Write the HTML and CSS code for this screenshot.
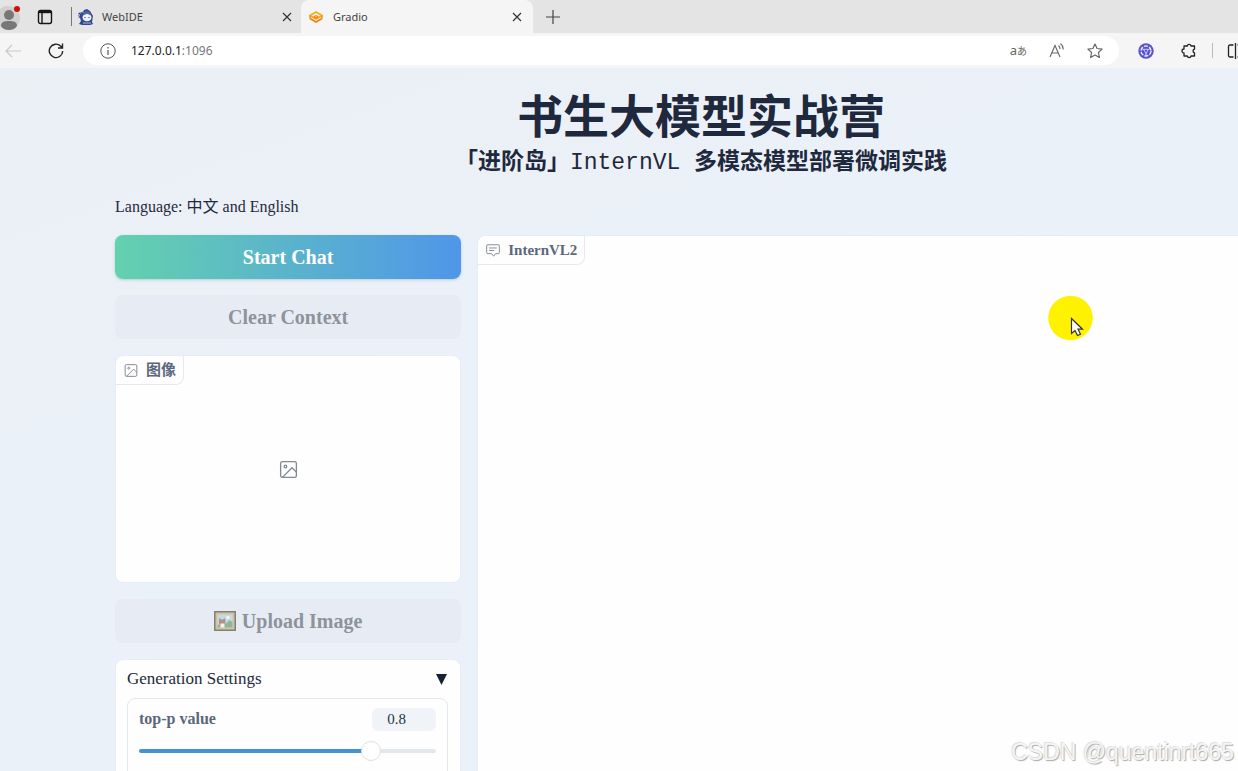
FILE: index.html
```
<!DOCTYPE html>
<html lang="zh-CN">
<head>
<meta charset="utf-8">
<title>Gradio</title>
<link rel="stylesheet" href="styles.css">
</head>
<body>
<header class="browser">
  <div class="tabs">
    <button class="profile" aria-label="Profile">
      <svg width="20" height="26" viewBox="0 0 20 26"><circle cx="8" cy="14" r="12" fill="#d2d0cf"/><circle cx="9" cy="11" r="5" fill="#777"/><path d="M1 22c0-4 3-5 8-5s8 1 8 5c-2 3-5 4-8 4s-6-1-8-4z" fill="#777"/><circle cx="17" cy="5" r="3" fill="#c5120c"/></svg>
    </button>
    <button class="workspace" aria-label="Tab actions">
      <svg width="16" height="16" viewBox="0 0 16 16" fill="none" stroke="#161616" stroke-width="1.4"><rect x="1.5" y="1.5" width="13" height="13" rx="2"/><path d="M2 3h12" stroke-width="2.4"/><path d="M5 4v10"/></svg>
    </button>
    <div class="tab tab-idle">
      <svg width="16" height="16" viewBox="0 0 16 16"><path d="M0 4l5-1 1-2 3-1 3 2 3 5-1 6 1 2-3 1H4l-3-1 2-3-1-3-2-1 2-1z" fill="#34478e"/><path d="M0 7l4-4 2 1" fill="none" stroke="#7184c4"/><ellipse cx="9" cy="8.5" rx="4.5" ry="3.8" fill="#eef0fa"/><path d="M5 6c2 0 3-1 4-2 1 1 2 2 4 2-1-3-2-4-4-4S5 4 5 6z" fill="#52659f"/><path d="M7 8v1M11 8v1" stroke="#27366f"/><path d="M5 14h8" stroke="#a9b6de"/></svg>
      <span class="tab-name">WebIDE</span>
      <button class="close" aria-label="Close WebIDE"><svg width="10" height="10" viewBox="0 0 10 10"><path d="M1 1l8 8M9 1L1 9" stroke="#333" stroke-width="1.2"/></svg></button>
    </div>
    <div class="tab tab-active">
      <svg width="14" height="14" viewBox="0 0 14 14" fill="none"><path d="M1 5.500L7 2l6 3.500L7 9z" stroke="#fbab20" stroke-width="1.800"/><path d="M1 8.500L7 12l6-3.500" stroke="#f08313" stroke-width="1.800"/><path d="M1 5.500v3M13 5.500v3M5 7c1-1.500 3-1.500 4 0-1 1.200-3 1.200-4 0z" stroke="#f18418" stroke-width="1.300"/></svg>
      <span class="tab-name">Gradio</span>
      <button class="close" aria-label="Close Gradio"><svg width="10" height="10" viewBox="0 0 10 10"><path d="M1 1l8 8M9 1L1 9" stroke="#333" stroke-width="1.2"/></svg></button>
    </div>
    <button class="new-tab" aria-label="New tab"><svg width="14" height="14" viewBox="0 0 14 14"><path d="M7 0v14M0 7h14" stroke="#444" stroke-width="1.2"/></svg></button>
  </div>
  <div class="toolbar">
    <button class="back" aria-label="Back"><svg width="16" height="14" viewBox="0 0 16 14" fill="none" stroke="#c8c8c8" stroke-width="1.2"><path d="M16 7H1M7 1L1 7l6 6"/></svg></button>
    <button class="reload" aria-label="Reload"><svg width="16" height="16" viewBox="0 0 16 16" fill="none" stroke="#222" stroke-width="1.4"><path d="M14.700 8A6.700 6.700 0 1 1 12.800 3.200L14.500 5M14.500 0.500V5H10"/></svg></button>
    <div class="address">
      <svg width="16" height="16" viewBox="0 0 16 16" fill="none" stroke="#555"><circle cx="8" cy="8" r="7.2"/><path d="M8 7v5M8 4v1.4" stroke-width="1.2"/></svg>
      <span class="url">127.0.0.1<span class="port">:1096</span></span>
      <button class="translate" aria-label="Translate">a<span class="kana">あ</span></button>
      <button class="aloud" aria-label="Read aloud"><svg width="16" height="16" viewBox="0 0 16 16" fill="none" stroke="#666" stroke-width="1.1"><path d="M1 14L6 2.500 11 14M2.800 10h6.400M9.500 2.500c1 1 1.500 2 1.500 3.500M11.500 .5c1.800 1.500 2.800 3.500 2.800 6"/></svg></button>
      <button class="favorite" aria-label="Favorite"><svg width="16" height="16" viewBox="0 0 16 16" fill="none" stroke="#666" stroke-width="1.2" stroke-linejoin="round"><path d="M8 1l2.100 4.500 5 .6-3.700 3.400 1 5L8 12l-4.400 2.500 1-5L.9 6.100l5-.6z"/></svg></button>
    </div>
    <button class="extension" aria-label="Extension"><svg width="16" height="16" viewBox="0 0 16 16"><circle cx="8" cy="8" r="7.700" fill="#5752cf"/><g fill="none" stroke="#e8e8ff" stroke-width="1.400"><circle cx="8" cy="8" r="5" stroke-dasharray="4 1.236"/><path d="M5.500 6.500L3 5M10.500 6.500L13 5M8 10.500V13" stroke-width="1"/></g><path d="M5.500 6.300h5L8 10.500z" fill="#5752cf" stroke="#e8e8ff" stroke-width=".8"/></svg></button>
    <button class="puzzle" aria-label="Extensions"><svg width="16" height="16" viewBox="0 0 16 16" fill="none" stroke="#222" stroke-width="1.300" stroke-linejoin="round"><path d="M4 3h2.200a2 2 0 0 1 3.900 0H13.500v3.200a1.900 1.900 0 0 0 0 3.700V13h-3.400a2 2 0 0 1-3.900 0H3V10a2 2 0 0 1 0-4V3z"/></svg></button>
    <span class="divider"></span>
    <button class="split" aria-label="Split screen"><svg width="16" height="16" viewBox="0 0 16 16" fill="none" stroke="#222" stroke-width="1.300"><path d="M6.500 2H3a1.500 1.500 0 0 0-1.500 1.500v9A1.500 1.500 0 0 0 3 14h3.500M8.500 0v16M10.500 2h4v12h-4"/></svg></button>
  </div>
</header>
<div class="viewport">
<main class="page">
  <h1 class="title">书生大模型实战营</h1>
  <h2 class="subtitle">「进阶岛」<span class="latin">InternVL </span>多模态模型部署微调实践</h2>
  <p class="language">Language: 中文 and English</p>
  <div class="columns">
    <section class="controls">
      <button class="btn primary">Start Chat</button>
      <button class="btn secondary" disabled>Clear Context</button>
      <div class="image-panel">
        <div class="label">
          <svg class="icon" viewBox="2 2 20 20"><rect x="3" y="3" width="18" height="18" rx="2"/><circle cx="8.500" cy="8.500" r="1.500"/><path d="M21 15l-5-5L5 21"/></svg>
          <span>图像</span>
        </div>
        <div class="empty"><svg class="icon-large" viewBox="0 0 24 24"><rect x="3" y="3" width="18" height="18" rx="2"/><circle cx="8.500" cy="8.500" r="1.500"/><path d="M21 15l-5-5L5 21"/></svg></div>
      </div>
      <button class="btn secondary" disabled>
        <svg width="22" height="20" viewBox="0 0 22 20"><rect width="22" height="20" fill="#7f8078"/><rect x="1.500" y="1.500" width="19" height="17" fill="#d3c39c"/><rect x="3.500" y="3.500" width="15" height="13" fill="#c2dbe5"/><circle cx="14" cy="6.500" r="1.800" fill="#f0f4ef"/><path d="M3.500 14l5-1 3 0 4-4 3 2v5.500h-15z" fill="#8eb79a"/><path d="M5 7l2 1.500h2L11 7l.5 6-3 1.500-3.500-1z" fill="#b58e84"/><path d="M6.500 12.500h4v4h-4z" fill="#f5f2ed"/></svg>
        <span>Upload Image</span>
      </button>
      <section class="settings">
        <button class="settings-head"><span>Generation Settings</span><svg width="11" height="11" viewBox="0 0 11 11"><path d="M0 0h11L5.500 11z" fill="#172136"/></svg></button>
        <div class="slider-card">
          <div class="slider-head">
            <label for="top-p">top-p value</label>
            <input class="number" type="text" inputmode="decimal" value="0.8" aria-label="top-p number">
          </div>
          <input class="range" id="top-p" type="range" min="0" max="1" step="0.1" value="0.8">
        </div>
      </section>
    </section>
    <section class="chat">
      <div class="label">
        <svg class="icon" viewBox="1 2 22 20"><path d="M4 3h16a2 2 0 0 1 2 2v10a2 2 0 0 1-2 2h-4l-3 4-3-4H4a2 2 0 0 1-2-2V5a2 2 0 0 1 2-2zM6 8h12M6 12h8"/></svg>
        <span>InternVL2</span>
      </div>
    </section>
  </div>
</main>
</div>
<div class="pointer"><svg width="46" height="46" viewBox="0 0 46 46"><circle cx="22.500" cy="23" r="22.300" fill="#fff200"/><path d="M23.500 23.500v15l3.500-3 2.500 5 3-1.300-2.500-5h4.500z" fill="#fff" stroke="#333" stroke-width="1.200"/></svg></div>
<div class="watermark">CSDN @quentinrt665</div>
</body>
</html>
```
FILE: styles.css
```
* { box-sizing: border-box; }
body {
  margin: 0;
  height: 100vh;
  overflow: hidden;
  display: flex;
  flex-direction: column;
  color: #1f293d;
  background: #ebf1f8;
  font-family: "Liberation Serif", "Noto Sans CJK SC", serif;
}
button, input { font: inherit; color: inherit; }
button { border: 0; padding: 0; background: none; }
svg { display: block; flex: none; }

.browser { flex: none; font-family: "Noto Sans", "Noto Sans CJK SC", sans-serif; background: #f5f5f5; }
.tabs { display: flex; align-items: center; height: 33px; background: #e4e4e4; }
.workspace { margin-left: 17px; }
.tab { display: flex; align-items: center; height: 33px; font-size: 11px; color: #444; }
.tab-idle { width: 230px; margin-left: 18px; padding: 0 9px 0 7px; position: relative; }
.tab-idle::before { content: ""; position: absolute; left: 0; top: 7px; width: 1px; height: 19px; background: #777; }
.tab-active { width: 232px; padding: 0 11px 0 8px; background: #f5f5f5; border-radius: 8px 8px 0 0; }
.tab-name { flex: 1; margin-left: 8px; }
.tab-active .tab-name { margin-left: 10px; }
.new-tab { margin-left: 13px; }
.toolbar { display: flex; align-items: center; height: 35px; }
.back { margin-left: 5px; }
.reload { margin-left: 27px; }
.address {
  flex: 1; display: flex; align-items: center; height: 29px;
  margin-left: 19px; padding: 0 16px 0 17px;
  background: #fff; border-radius: 15px;
}
.url { flex: 1; margin-left: 15px; font-size: 12px; color: #222; }
.port { color: #777; }
.translate { font-size: 13px; line-height: 18px; color: #666; }
.kana { font-size: 10px; }
.aloud, .favorite { margin-left: 22px; }
.extension { margin-left: 19px; }
.puzzle { margin-left: 27px; }
.divider { width: 1px; height: 15px; margin-left: 15px; background: #bbb; }
.split { width: 11px; margin-left: 14px; overflow: hidden; }

.viewport { flex: 1; min-height: 0; display: flex; overflow: hidden; }
.page {
  flex: none;
  display: flex; flex-direction: column;
  width: calc(100% + 164px);
  padding: 16px 115px 0;
  background: linear-gradient(160deg, #ebf0f5, #ebf1f9 45%, #eaf0f7);
}
.title, .subtitle { margin: 0; text-align: center; font-weight: 700; }
.title { font-size: 46px; line-height: 58px; font-family: "Noto Sans CJK SC", sans-serif; }
.subtitle { margin-top: 6px; font-size: 23px; line-height: 30px; font-family: "Liberation Mono", "Noto Sans CJK SC", monospace; }
.latin { font-weight: 400; white-space: pre; }
.language { margin: 17px 0 16px; font-size: 16px; line-height: 24px; }
.columns { flex: 1; min-height: 0; display: flex; gap: 16px; }
.controls { flex: 3 1 0; min-width: 0; display: flex; flex-direction: column; gap: 16px; }
.btn {
  flex: none; display: flex; align-items: center; justify-content: center; gap: 6px;
  height: 44px; border-radius: 8px; font-size: 20px; font-weight: 700;
}
.primary { color: #fff; background: linear-gradient(90deg, #64d1ae, #5096e9); box-shadow: 0 1px 3px #b9cbd5; }
.secondary { color: #8e939b; background: #e7ecf4; }
.image-panel, .settings, .chat { background: #fefefe; border: 1px solid #e7edf4; border-radius: 8px; }
.image-panel { flex: none; display: flex; flex-direction: column; height: 228px; position: relative; }
.label {
  align-self: flex-start; display: flex; align-items: center; gap: 8px;
  height: 29px; padding: 0 7px 0 8px;
  border: solid #e5eaf1; border-width: 0 1px 1px 0; border-radius: 8px 0;
  color: #5b687c; font-size: 15px; line-height: 20px; font-weight: 700;
}
.icon, .icon-large { fill: none; stroke: #838993; stroke-width: 1.5; stroke-linejoin: round; }
.icon { width: 14px; height: 13px; }
.icon-large { width: 21px; height: 21px; }
.empty { position: absolute; inset: 0; display: grid; place-items: center; }
.settings { flex: none; padding: 7px 12px 12px 11px; }
.settings-head { display: flex; align-items: center; justify-content: space-between; width: 100%; height: 24px; padding-right: 1px; font-size: 17px; }
.slider-card { margin-top: 7px; height: 92px; padding: 9px 11px; border: 1px solid #e3e8ee; border-radius: 8px; }
.slider-head { display: flex; justify-content: space-between; height: 23px; font-size: 16px; line-height: 22px; font-weight: 700; color: #5b687c; }
.number { width: 64px; height: 23px; padding: 0 15px; border: 0; border-radius: 6px; background: #f0f4f8; font-size: 15px; font-weight: 400; color: #263247; }
.range {
  appearance: none; display: block; width: 100%; height: 4px; margin: 18px 0 0;
  border-radius: 2px; background: linear-gradient(90deg, #4292d5 78%, #e2e7eb 78%);
}
.range::-webkit-slider-thumb { appearance: none; width: 20px; height: 20px; border: 1px solid #dde0e5; border-radius: 50%; background: #fff; }
.chat { flex: 7 1 0; display: flex; align-items: flex-start; border-bottom: 0; border-radius: 8px 8px 0 0; }
.pointer { position: absolute; left: 1048px; top: 295px; }
.watermark {
  position: absolute; right: 4px; bottom: 5px;
  font: 23px/28px "Liberation Sans", sans-serif;
  color: #f5f5f5; text-shadow: 1px 1px 1px #aaa, -1px -1px 1px #ddd;
}
```
